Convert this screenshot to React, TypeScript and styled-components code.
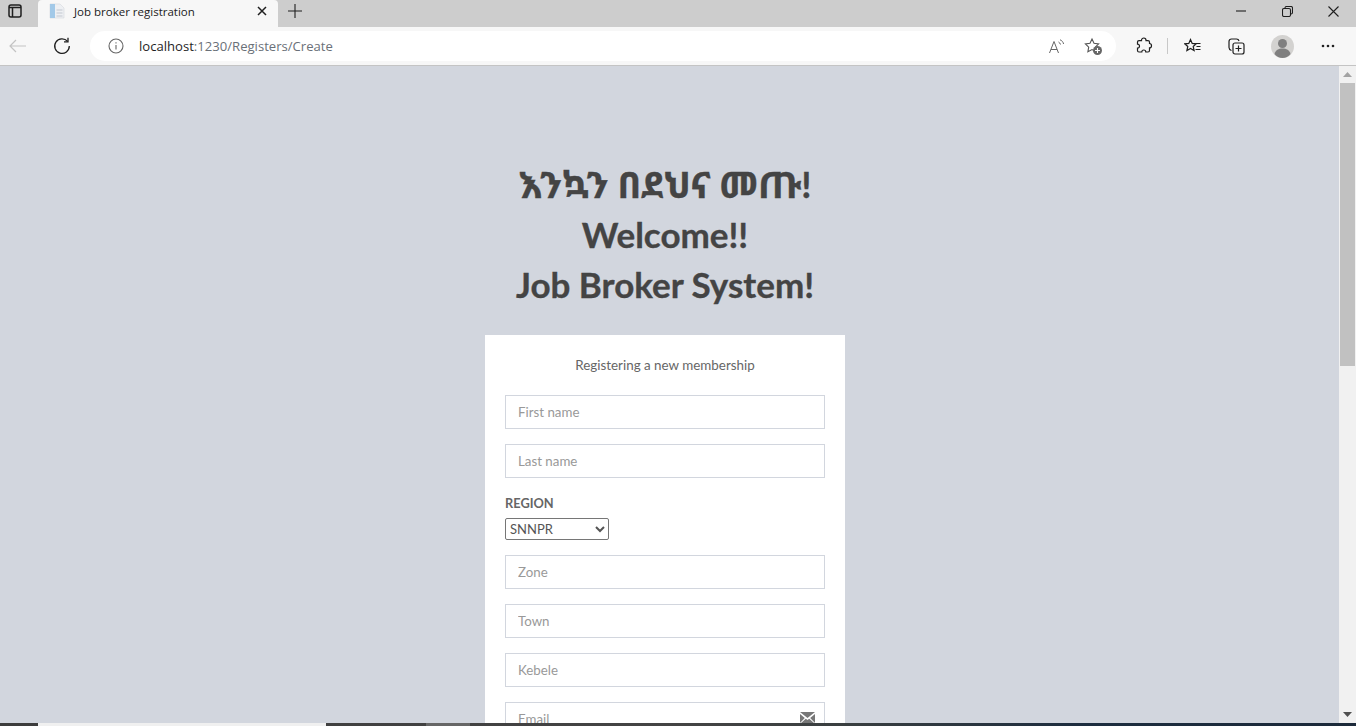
import React from "react";
import styled, { createGlobalStyle } from "styled-components";

const Global = createGlobalStyle`
  html, body { margin: 0; padding: 0; height: 100%; overflow: hidden; }
  * { box-sizing: border-box; }
  body { font-family: "Open Sans", "Noto Sans", "Liberation Sans", sans-serif; }
`;

const Window = styled.div`
  width: 1356px;
  height: 726px;
  display: flex;
  flex-direction: column;
  overflow: hidden;
  background: #d2d6de;
`;

const TabStrip = styled.div`
  height: 27px;
  flex: none;
  background: #cdcdcd;
  display: flex;
  align-items: stretch;
`;

const StripButton = styled.button<{ $ml?: number }>`
  width: 29px;
  border: 0;
  padding: 0 0 5px;
  background: #cdcdcd;
  display: flex;
  align-items: center;
  justify-content: center;
  margin-left: ${(p) => p.$ml ?? 0}px;
`;

const Tab = styled.div`
  width: 240px;
  margin: 0 0 0 9px;
  background: #f7f7f7;
  border-radius: 4px 4px 0 0;
  display: flex;
  align-items: center;
  padding: 0 11px 5px 11px;
  font-family: "Open Sans", sans-serif;
  font-size: 11.5px;
  color: #222;
`;

const TabTitle = styled.span`
  flex: 1;
  margin-left: 8px;
  white-space: nowrap;
`;

const StripSpacer = styled.div`
  flex: 1;
`;

const WindowButton = styled.div`
  width: 46px;
  padding-bottom: 5px;
  display: flex;
  align-items: center;
  justify-content: center;
`;

const Toolbar = styled.div`
  height: 39px;
  flex: none;
  background: #f7f7f7;
  border-bottom: 1px solid #c4c4c4;
  display: flex;
  align-items: center;
`;

const NavSlot = styled.div<{ $w: number; $ml?: number }>`
  width: ${(p) => p.$w}px;
  margin-left: ${(p) => p.$ml ?? 0}px;
  flex: none;
  height: 100%;
  display: flex;
  align-items: center;
  justify-content: center;
`;

const AddressBar = styled.div`
  width: 1026px;
  height: 30px;
  margin-left: 2px;
  flex: none;
  background: #fff;
  border-radius: 15px;
  display: flex;
  align-items: center;
  padding: 0 13px 0 18px;
`;

const Url = styled.div`
  flex: 1;
  margin-left: 15px;
  font-family: "Open Sans", sans-serif;
  font-size: 13.1px;
  color: #1f1f1f;
  white-space: nowrap;
`;

const UrlDim = styled.span`
  color: #6a7078;
`;

const AddressIcons = styled.div`
  display: flex;
  align-items: center;
  gap: 19px;
`;

const Divider = styled.div`
  width: 1px;
  height: 16px;
  background: #c8c8c8;
  flex: none;
`;

const Body = styled.div`
  flex: 1;
  min-height: 0;
  display: flex;
`;

const Page = styled.main`
  flex: 1;
  min-width: 0;
  overflow: hidden;
  display: flex;
  flex-direction: column;
  align-items: center;
  padding: 93px 9px 0 0;
  font-family: "Lato", "Noto Sans", sans-serif;
  color: #444;
`;

const Heading = styled.h1`
  margin: 0 0 1px;
  font-family: "Lato", "Noto Sans", "Noto Sans Ethiopic", sans-serif;
  font-size: 35px;
  line-height: 50px;
  font-weight: 700;
  -webkit-text-stroke: 0.35px #444;
  text-align: center;
  color: #444;
  white-space: nowrap;
`;

const AmharicLine = styled.span`
  font-size: 36.5px;
`;

const Card = styled.section`
  width: 360px;
  flex: none;
  margin-top: 25px;
  background: #fff;
  padding: 20px;
  color: #666;
`;

const Intro = styled.p`
  margin: 0 0 20px;
  text-align: center;
  font-size: 13.4px;
  line-height: 20px;
`;

const Field = styled.div`
  position: relative;
  margin-bottom: 15px;
`;

const Input = styled.input`
  display: block;
  width: 100%;
  height: 34px;
  padding: 6px 12px;
  border: 1px solid #d2d6de;
  border-radius: 0;
  background: #fff;
  font-family: inherit;
  font-size: 13.3px;
  color: #555;
  &::placeholder { color: #999; opacity: 1; }
`;

const FieldIcon = styled.span`
  position: absolute;
  right: 10px;
  top: 10px;
  display: flex;
`;

const Label = styled.label`
  display: block;
  font-weight: 700;
  font-size: 12.8px;
  line-height: 20px;
  margin-bottom: 5px;
  color: #666;
`;

const RegionGroup = styled.div`
  margin-bottom: 15px;
`;

const Select = styled.select`
  display: block;
  width: 104px;
  height: 22px;
  font-family: inherit;
  font-size: 13px;
  color: #555;
  background: #fff;
  border: 1px solid #767676;
  border-radius: 2px;
  padding: 0;
`;

const Scrollbar = styled.div`
  width: 17px;
  flex: none;
  background: #f1f1f1;
  display: flex;
  flex-direction: column;
  align-items: center;
`;

const ScrollArrow = styled.div`
  height: 17px;
  flex: none;
  display: flex;
  align-items: center;
  justify-content: center;
`;

const ScrollThumb = styled.div`
  width: 15px;
  height: 283px;
  flex: none;
  background: #c1c1c1;
`;

const ScrollTrack = styled.div`
  flex: 1;
`;

const Taskbar = styled.div`
  height: 3px;
  flex: none;
  display: flex;
  background: linear-gradient(90deg, #3c3c3c 0%, #444 50%, #3a3f40 62%, #1d2d3f 80%, #1c2a3a 100%);
`;

const TaskSegment = styled.div<{ $w: number; $c?: string }>`
  width: ${(p) => p.$w}px;
  flex: none;
  background: ${(p) => p.$c ?? "transparent"};
`;

const stroke = { fill: "none", stroke: "#1f1f1f", strokeWidth: 1.1 } as const;

const App = () => (
  <Window>
    <Global />
    <TabStrip>
      <StripButton>
        <svg width="14" height="14" viewBox="0 0 14 14" {...stroke} strokeWidth={1.5}>
          <rect x="1" y="1" width="12" height="12" rx="2" />
          <path d="M1 3.500h12M4.500 3.500V13" />
        </svg>
      </StripButton>
      <Tab>
        <svg width="17" height="16" viewBox="0 0 17 16">
          <path d="M1 1h10l4 4v10H1z" fill="#eef0f3" stroke="#d5d8dd" strokeWidth="0.6" />
          <rect x="1" y="1" width="5" height="14" fill="#a2c9e8" />
          <path d="M7.500 7h6M7.500 10h6M7.500 13h6" stroke="#c3c8d0" strokeWidth="1" />
        </svg>
        <TabTitle>Job broker registration</TabTitle>
        <svg width="10" height="10" viewBox="0 0 10 10" {...stroke} strokeWidth={1.5}>
          <path d="M1 1l8 8M9 1l-8 8" />
        </svg>
      </Tab>
      <StripButton $ml={2}>
        <svg width="14" height="14" viewBox="0 0 14 14" {...stroke}>
          <path d="M7 0v14M0 7h14" />
        </svg>
      </StripButton>
      <StripSpacer />
      <WindowButton>
        <svg width="10" height="2" viewBox="0 0 10 2" {...stroke}><path d="M0 1h10" /></svg>
      </WindowButton>
      <WindowButton>
        <svg width="11" height="11" viewBox="0 0 11 11" {...stroke}>
          <rect x="0.500" y="2.500" width="8" height="8" rx="1.500" />
          <path d="M3 2.500V2a1.500 1.500 0 0 1 1.500-1.500H9A1.500 1.500 0 0 1 10.500 2v4.500A1.500 1.500 0 0 1 9 8h-.5" />
        </svg>
      </WindowButton>
      <WindowButton>
        <svg width="11" height="11" viewBox="0 0 11 11" {...stroke}><path d="M0.500 0.500l10 10M10.500 0.500l-10 10" /></svg>
      </WindowButton>
    </TabStrip>

    <Toolbar>
      <NavSlot $w={36}>
        <svg width="18" height="14" viewBox="0 0 18 14" fill="none" stroke="#c3c3c3" strokeWidth="1.2">
          <path d="M17 7H1M7 1L1 7l6 6" />
        </svg>
      </NavSlot>
      <NavSlot $w={52}>
        <svg width="18" height="18" viewBox="0 0 18 18" {...stroke} strokeWidth={1.3}>
          <path d="M14.600 4.400A7.300 7.300 0 1 0 16.300 9" />
          <path d="M15 0.800v4h-4" />
        </svg>
      </NavSlot>
      <AddressBar>
        <svg width="16" height="16" viewBox="0 0 16 16" fill="none" stroke="#666" strokeWidth="1.1">
          <circle cx="8" cy="8" r="7" />
          <path d="M8 7v4.500M8 4.200v1.300" />
        </svg>
        <Url>localhost<UrlDim>:1230/Registers/Create</UrlDim></Url>
        <AddressIcons>
          <svg width="16" height="15" viewBox="0 0 16 15" fill="none" stroke="#666" strokeWidth="1">
            <path d="M0.500 14L5 2.500 9.500 14M2 10.500h6" />
            <path d="M9.500 3c1 .5 1.700 1.300 2 2.500M11 .8c1.800.6 3.200 2.200 3.600 4.200" />
          </svg>
          <svg width="19" height="19" viewBox="0 0 19 19">
            <path d="M8 2l2 4.300 4.600.6-3.300 3.200.8 4.600L8 12.500 3.900 14.700l.8-4.600L1.400 6.900 6 6.300z" fill="none" stroke="#555" strokeWidth="1.1" />
            <circle cx="13.500" cy="13.500" r="4.500" fill="#666" />
            <path d="M13.500 11v5M11 13.500h5" stroke="#fff" strokeWidth="1.100" />
          </svg>
        </AddressIcons>
      </AddressBar>
      <NavSlot $w={46} $ml={5}>
        <svg width="18" height="18" viewBox="0 0 18 18" {...stroke} strokeWidth={1.2}>
          <path d="M6.500 3.200C6.500 1.800 7.600 1 8.800 1C10 1 11 1.900 11 3.200V3.600H13C14 3.600 14.500 4.200 14.500 5V6.500C15.800 6.500 16.500 7.500 16.500 8.700C16.500 9.900 15.800 10.900 14.500 10.900V13.500C14.500 14.300 14 15 13 15H10.800C10.800 13.800 10 13 8.800 13C7.600 13 6.800 13.800 6.800 15H4C3 15 2.500 14.300 2.500 13.500V11.200C3.600 11.200 4.500 10.400 4.500 9.200C4.500 8 3.600 7.200 2.500 7.200V5C2.500 4.200 3 3.600 4 3.600H6.500Z" />
        </svg>
      </NavSlot>
      <Divider />
      <NavSlot $w={48}>
        <svg width="17" height="16" viewBox="0 0 17 16" {...stroke} strokeWidth={1.2}>
          <path d="M6.500 1.500l1.700 3.900 4 .4-3 2.700.9 4.100-3.600-2.100-3.600 2.100.9-4.100-3-2.700 4-.4z" />
          <path d="M12 5.500h4.500M12.500 8.500h4M11.500 11.500h5" />
        </svg>
      </NavSlot>
      <NavSlot $w={40}>
        <svg width="17" height="17" viewBox="0 0 17 17" {...stroke} strokeWidth={1.2}>
          <path d="M3.500 12.500C2 12 1 11 1 9.500V3.500C1 2 2 1 3.500 1h5c1.300 0 2.200.6 2.500 2" />
          <rect x="5" y="5" width="11" height="11" rx="2" />
          <path d="M10.500 7.500v6M7.500 10.500h6" />
        </svg>
      </NavSlot>
      <NavSlot $w={52}>
        <svg width="23" height="23" viewBox="0 0 23 23">
          <circle cx="11.500" cy="11.500" r="11.500" fill="#d3d2d0" />
          <circle cx="11.500" cy="8.500" r="4.500" fill="#7f7f7f" />
          <path d="M3.500 19c1-4 4-5.500 8-5.500s7 1.500 8 5.500c-2 2.500-5 4-8 4s-6-1.500-8-4z" fill="#7f7f7f" />
        </svg>
      </NavSlot>
      <NavSlot $w={40}>
        <svg width="14" height="4" viewBox="0 0 14 4" fill="#222">
          <circle cx="2" cy="2" r="1.300" />
          <circle cx="7" cy="2" r="1.300" />
          <circle cx="12" cy="2" r="1.300" />
        </svg>
      </NavSlot>
    </Toolbar>

    <Body>
      <Page>
        <Heading>
          <AmharicLine>እንኳን በደህና መጡ!</AmharicLine>
          <br />
          Welcome!!
          <br />
          Job Broker System!
        </Heading>
        <Card>
          <Intro>Registering a new membership</Intro>
          <Field><Input placeholder="First name" /></Field>
          <Field><Input placeholder="Last name" /></Field>
          <RegionGroup>
            <Label>REGION</Label>
            <Select defaultValue="SNNPR">
              <option>SNNPR</option>
            </Select>
          </RegionGroup>
          <Field><Input placeholder="Zone" /></Field>
          <Field><Input placeholder="Town" /></Field>
          <Field><Input placeholder="Kebele" /></Field>
          <Field>
            <Input placeholder="Email" />
            <FieldIcon>
              <svg width="15" height="11" viewBox="0 0 15 11">
                <path d="M0 0h15L7.500 6z" fill="#777" />
                <path d="M0 2v9l4.800-5zM15 2v9l-4.800-5zM1 11h13L9.200 6.800 7.500 8 5.800 6.800z" fill="#777" />
              </svg>
            </FieldIcon>
          </Field>
        </Card>
      </Page>
      <Scrollbar>
        <ScrollArrow>
          <svg width="9" height="5" viewBox="0 0 9 5"><path d="M4.500 0L9 5H0z" fill="#a3a3a3" /></svg>
        </ScrollArrow>
        <ScrollThumb />
        <ScrollTrack />
        <ScrollArrow>
          <svg width="9" height="5" viewBox="0 0 9 5"><path d="M0 0h9L4.500 5z" fill="#505050" /></svg>
        </ScrollArrow>
      </Scrollbar>
    </Body>
    <Taskbar>
      <TaskSegment $w={38} />
      <TaskSegment $w={288} $c="#f0f0f0" />
      <TaskSegment $w={100} />
      <TaskSegment $w={44} $c="#666" />
    </Taskbar>
  </Window>
);

export default App;
